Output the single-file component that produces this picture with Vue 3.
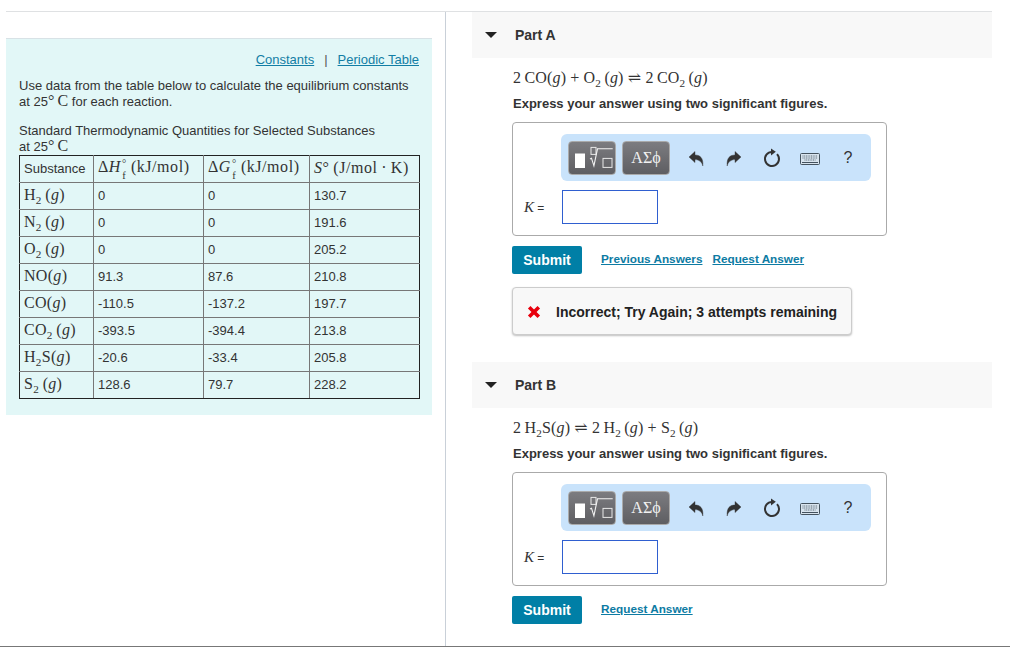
<script setup>
const rows = [
  { a: 'H', s: '2', b: '', dh: '0', dg: '0', so: '130.7' },
  { a: 'N', s: '2', b: '', dh: '0', dg: '0', so: '191.6' },
  { a: 'O', s: '2', b: '', dh: '0', dg: '0', so: '205.2' },
  { a: 'NO', s: '', b: '', dh: '91.3', dg: '87.6', so: '210.8' },
  { a: 'CO', s: '', b: '', dh: '-110.5', dg: '-137.2', so: '197.7' },
  { a: 'CO', s: '2', b: '', dh: '-393.5', dg: '-394.4', so: '213.8' },
  { a: 'H', s: '2', b: 'S', dh: '-20.6', dg: '-33.4', so: '205.8' },
  { a: 'S', s: '2', b: '', dh: '128.6', dg: '79.7', so: '228.2' }
]

const parts = [
  { name: 'Part A', reaction: 'a', previous: true, incorrect: true },
  { name: 'Part B', reaction: 'b', previous: false, incorrect: false }
]
</script>

<template>
  <div class="page">
    <div class="frame">
      <div class="left-col">
        <div class="info-panel">
          <div class="links">
            <a class="link">Constants</a>
            <span class="link-sep">|</span>
            <a class="link">Periodic Table</a>
          </div>
          <p class="intro">
            Use data from the table below to calculate the equilibrium constants<br />
            at 25<span class="math">°&thinsp;C</span> for each reaction.
          </p>
          <p class="caption">
            Standard Thermodynamic Quantities for Selected Substances<br />
            at 25<span class="math">°&thinsp;C</span>
          </p>
          <table class="data-table">
            <colgroup>
              <col class="c1" /><col class="c2" /><col class="c3" /><col class="c4" />
            </colgroup>
            <thead>
              <tr>
                <th>Substance</th>
                <th class="math">Δ<i>H</i><span class="stack"><span>°</span><span>f</span></span>&thinsp;(kJ/mol)</th>
                <th class="math">Δ<i>G</i><span class="stack"><span>°</span><span>f</span></span>&thinsp;(kJ/mol)</th>
                <th class="math"><i>S</i>°&thinsp;(J/mol&thinsp;·&thinsp;K)</th>
              </tr>
            </thead>
            <tbody>
              <tr v-for="(row, i) in rows" :key="i">
                <td class="math formula">{{ row.a }}<sub v-if="row.s">{{ row.s }}</sub>{{ row.b }}<span v-if="row.s && !row.b">&thinsp;</span>(<i>g</i>)</td>
                <td>{{ row.dh }}</td>
                <td>{{ row.dg }}</td>
                <td>{{ row.so }}</td>
              </tr>
            </tbody>
          </table>
        </div>
      </div>

      <div class="right-col">
        <section v-for="part in parts" :key="part.name" class="part">
          <header class="part-head">
            <span class="caret"></span>
            <span class="part-name">{{ part.name }}</span>
          </header>
          <div class="part-body">
            <div v-if="part.reaction === 'a'" class="math reaction">
              2&thinsp;CO(<i>g</i>) + O<sub>2</sub>&thinsp;(<i>g</i>) ⇌ 2&thinsp;CO<sub>2</sub>&thinsp;(<i>g</i>)
            </div>
            <div v-else class="math reaction">
              2&thinsp;H<sub>2</sub>S(<i>g</i>) ⇌ 2&thinsp;H<sub>2</sub>&thinsp;(<i>g</i>) + S<sub>2</sub>&thinsp;(<i>g</i>)
            </div>
            <div class="instruction">Express your answer using two significant figures.</div>

            <div class="answer-box">
              <div class="toolbar">
                <button class="tool-btn root-btn">
                  <svg width="48" height="34" viewBox="0 0 48 34">
                    <rect x="7" y="12.500" width="10" height="14.500" fill="#fff" />
                    <rect x="23" y="6.400" width="5" height="7" fill="none" stroke="#e8e8e8" stroke-width="1" />
                    <path d="M22 18l1.500-.8 2.400 7.600 3.600-17h15.200" fill="none" stroke="#f2f2f2" stroke-width="1.100" />
                    <rect x="35" y="17.400" width="9" height="9" fill="none" stroke="#e8e8e8" stroke-width="1" />
                  </svg>
                </button>
                <button class="tool-btn greek-btn">ΑΣϕ</button>
                <div class="tool-icons">
                  <svg class="tool-icon" width="24" height="24" viewBox="-5 -5 24 24">
                    <path d="M0 6L6 .5V4c5 0 8.600 2.800 7.800 11C13 11.200 10.200 8.600 6 8.600v3z" fill="#333" stroke="#333" stroke-width=".4" stroke-linejoin="round" />
                  </svg>
                  <svg class="tool-icon" width="24" height="24" viewBox="-5 -5 24 24">
                    <path transform="matrix(-1 0 0 1 14 0)" d="M0 6L6 .5V4c5 0 8.600 2.800 7.800 11C13 11.200 10.200 8.600 6 8.600v3z" fill="#333" stroke="#333" stroke-width=".4" stroke-linejoin="round" />
                  </svg>
                  <svg class="tool-icon" width="24" height="24" viewBox="0 0 24 24">
                    <path d="M12 6A7 7 0 1 0 17 8.100" fill="none" stroke="#333" stroke-width="2" />
                    <path d="M11 2.500L15.800 5.800 11 9.500z" fill="#333" />
                  </svg>
                  <svg class="tool-icon" width="24" height="24" viewBox="0 0 24 24">
                    <rect x="2.500" y="7.500" width="19" height="11" rx="1" fill="#d8e4ee" stroke="#44525e" />
                    <path d="M4.500 10h15M4.500 12h15M6.500 14h11" stroke="#5c6a76" stroke-width="1" stroke-dasharray="1 .7" />
                    <path d="M4 16.500h16" stroke="#44525e" stroke-width="1" />
                  </svg>
                  <span class="help">?</span>
                </div>
              </div>
              <div class="input-row">
                <span class="k-label"><i class="math">K</i> =</span>
                <div class="answer-input"></div>
              </div>
            </div>

            <div class="actions">
              <button class="submit">Submit</button>
              <a v-if="part.previous" class="action-link">Previous Answers</a>
              <a class="action-link">Request Answer</a>
            </div>

            <div v-if="part.incorrect" class="feedback">
              <svg width="14" height="14" viewBox="0 0 14 14">
                <path d="M2.200 2.200l9.600 9.600M11.800 2.200l-9.600 9.600" stroke="#e8000d" stroke-width="3.600" />
              </svg>
              <span>Incorrect; Try Again; 3 attempts remaining</span>
            </div>
          </div>
        </section>
      </div>
    </div>
  </div>
</template>

<style>
html, body {
  margin: 0;
  background: #fff;
}
</style>

<style scoped>
.page {
  box-sizing: border-box;
  height: 647px;
  width: 1010px;
  overflow: hidden;
  padding-top: 11px;
  border-bottom: 1px solid #777;
  font-family: "Liberation Sans", Arial, sans-serif;
  color: #333;
}

.frame {
  box-sizing: border-box;
  display: flex;
  height: 100%;
  margin: 0 18px 0 6px;
  border-top: 1px solid #dfe1e3;
}

.left-col {
  box-sizing: border-box;
  width: 440px;
  flex-shrink: 0;
  padding-top: 26px;
  border-right: 1px solid #c9d0d8;
}

.info-panel {
  box-sizing: border-box;
  width: 426px;
  height: 377px;
  padding: 13px 13px 0;
  background: #e2f7f7;
  border-top: 1px solid #d8e2e6;
}

.math {
  font-family: "Liberation Serif", "DejaVu Serif", serif;
}

.links {
  display: flex;
  justify-content: flex-end;
  gap: 10px;
  font-size: 13px;
  line-height: 16px;
}

.link {
  color: #127ea5;
  text-decoration: underline;
}

.link-sep {
  color: #555;
}

.intro,
.caption {
  margin: 0;
  font-size: 13px;
  color: #333;
}

.intro {
  margin-top: 10px;
  line-height: 15.500px;
}

.caption {
  margin-top: 14px;
  margin-bottom: 1px;
  line-height: 15.500px;
}

.intro .math,
.caption .math {
  font-size: 16px;
  line-height: 0;
}

.data-table {
  width: 400px;
  table-layout: fixed;
  border-collapse: collapse;
  border: 1px solid #222;
  font-size: 13px;
}

.c1 { width: 74px; }
.c2 { width: 110px; }
.c3 { width: 106px; }
.c4 { width: 110px; }

.data-table th,
.data-table td {
  box-sizing: border-box;
  height: 27px;
  padding: 0 4px 1px;
  border: 1px solid #777;
  font-weight: normal;
  text-align: left;
  white-space: nowrap;
  color: #333;
}

.data-table th.math {
  padding-bottom: 3px;
  font-size: 16px;
  letter-spacing: 0.55px;
  line-height: 20px;
}

.data-table td.formula {
  font-size: 16px;
  letter-spacing: 0.3px;
  line-height: 20px;
  padding-bottom: 3px;
}

.data-table tr > :first-child {
  border-left-color: #222;
}

.data-table tbody tr:last-child td {
  border-bottom-color: #222;
}

.data-table thead th {
  border-top-color: #222;
}

.data-table tr > :last-child {
  border-right-color: #222;
}

sub {
  font-size: 0.7em;
  line-height: 0;
}

.stack {
  display: inline-flex;
  flex-direction: column;
  align-items: center;
  vertical-align: middle;
  height: 20px;
  margin: 0 1px 0 1px;
  font-size: 10.500px;
  line-height: 12px;
  letter-spacing: 0;
}

.right-col {
  flex: 1;
  min-width: 0;
  padding-left: 26px;
}

.part {
  margin-bottom: 27px;
}

.part-head {
  display: flex;
  align-items: center;
  height: 46px;
  padding-left: 13px;
  background: #f8f8f8;
}

.caret {
  width: 0;
  height: 0;
  margin-right: 18px;
  border-left: 6px solid transparent;
  border-right: 6px solid transparent;
  border-top: 6px solid #222;
}

.part-name {
  font-size: 14px;
  font-weight: bold;
  color: #333;
}

.part-body {
  padding-left: 40px;
}

.reaction {
  margin-top: 10px;
  padding-left: 1px;
  font-size: 16px;
  letter-spacing: 0.15px;
  line-height: 20px;
  color: #333;
}

.instruction {
  margin-top: 9px;
  padding-left: 1px;
  font-size: 13px;
  line-height: 14px;
  font-weight: bold;
  color: #333;
}

.answer-box {
  box-sizing: border-box;
  width: 375px;
  height: 114px;
  margin-top: 11px;
  padding: 11px 15px 0 48px;
  border: 1px solid #aaa;
  border-radius: 4px;
}

.toolbar {
  box-sizing: border-box;
  display: flex;
  align-items: center;
  gap: 6px;
  height: 47px;
  padding-left: 7px;
  background: #c9e3fb;
  border-radius: 6px;
}

.tool-btn {
  display: block;
  box-sizing: border-box;
  width: 48px;
  height: 34px;
  padding: 0;
  border: 1px solid #aaa;
  border-radius: 4px;
  background: linear-gradient(#7c7c80, #5e5e62);
  color: #f2f2f2;
}

.root-btn svg {
  display: block;
  margin: -1px;
}

.greek-btn {
  font-family: "Liberation Serif", "DejaVu Serif", serif;
  font-size: 16px;
}

.tool-icons {
  display: flex;
  align-items: center;
  gap: 14px;
  margin-left: 8px;
}

.tool-icon {
  display: block;
  flex-shrink: 0;
}

.help {
  width: 24px;
  text-align: center;
  font-size: 16px;
  color: #333;
}

.input-row {
  display: flex;
  align-items: center;
  gap: 13px;
  margin: 9px 0 0 -37px;
}

.k-label {
  width: 25px;
  font-size: 12px;
  white-space: nowrap;
}

.k-label i {
  font-size: 15px;
}

.answer-input {
  box-sizing: border-box;
  width: 96px;
  height: 34px;
  border: 1px solid #2f5fd0;
  background: #fff;
}

.actions {
  display: flex;
  align-items: center;
  margin-top: 10px;
  height: 28px;
}

.submit {
  width: 70px;
  height: 28px;
  padding: 0;
  margin-right: 19px;
  border: 0;
  border-radius: 2px;
  background: #007fa6;
  color: #fff;
  font-family: inherit;
  font-size: 14px;
  font-weight: bold;
}

.action-link {
  margin-right: 10px;
  margin-top: -4px;
  font-size: 11.750px;
  font-weight: bold;
  color: #0d7ba3;
  text-decoration: underline;
}

.feedback {
  box-sizing: border-box;
  display: flex;
  align-items: center;
  gap: 15px;
  width: 340px;
  height: 48px;
  margin-top: 13px;
  padding: 1px 0 0 14px;
  background: #f8f8f8;
  border: 1px solid #ccc;
  border-radius: 4px;
  box-shadow: 0 1px 2px rgba(0, 0, 0, 0.25);
  font-size: 14px;
  font-weight: bold;
  color: #222;
  white-space: nowrap;
}
</style>
